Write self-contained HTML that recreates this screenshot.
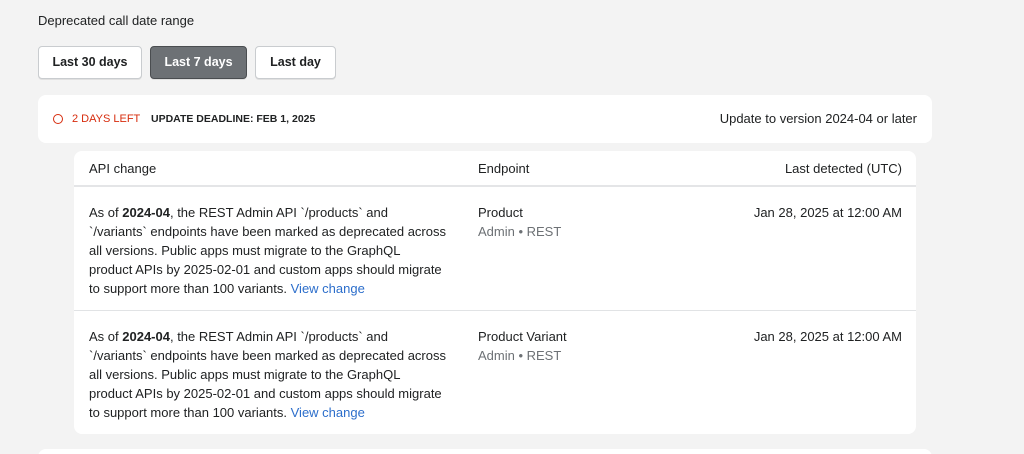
<!DOCTYPE html>
<html><head><style>
html,body{margin:0;width:1024px;height:454px;overflow:hidden}
body{background:#f3f3f3;font-family:"Liberation Sans",sans-serif;font-size:13px;color:#202223;position:relative}
.a{position:absolute;white-space:nowrap}
.btn{position:absolute;top:46px;border:1px solid #c9cccf;border-radius:4px;background:#fff;box-sizing:border-box;height:33px;line-height:31px;text-align:center;font-weight:bold;font-size:12.5px;box-shadow:0 1px 0 rgba(0,0,0,.08)}
.card{position:absolute;background:#fff;border-radius:8px}
.row{position:absolute;left:0;right:0;border-top:1px solid #e1e3e5}
.t{position:absolute;left:15px;top:16px;line-height:19px;font-size:13px;white-space:nowrap}
.grey{color:#6d7175}
a{color:#2c6ecb;text-decoration:none}
</style></head><body>
<div class="a" style="left:38px;top:13px">Deprecated call date range</div>
<div class="btn" style="left:38px;width:104px">Last 30 days</div>
<div class="btn" style="left:150px;width:97px;background:#6d7175;color:#fff;border-color:#4a4d50">Last 7 days</div>
<div class="btn" style="left:255px;width:81px">Last day</div>
<div class="card" style="left:38px;top:95px;width:894px;height:48px">
<div class="a" style="left:15px;top:19px;width:8px;height:8px;border:1.5px solid #d72c0d;border-radius:50%"></div>
<div class="a" style="left:34px;top:18px;color:#d72c0d;font-size:11px">2 DAYS LEFT</div>
<div class="a" style="left:113px;top:18px;font-weight:bold;font-size:10.5px">UPDATE DEADLINE: FEB 1, 2025</div>
<div class="a" style="right:15px;top:16px">Update to version 2024-04 or later</div>
</div>
<div class="card" style="left:74px;top:151px;width:842px;height:283px">
<div class="a" style="left:15px;top:10px">API change</div>
<div class="a" style="left:404px;top:10px">Endpoint</div>
<div class="a" style="right:14px;top:10px">Last detected (UTC)</div>
<div class="row" style="top:34px;height:124px;border-top:2px solid #e4e5e7">
<div class="t">As of <b>2024-04</b>, the REST Admin API `/products` and<br>`/variants` endpoints have been marked as deprecated across<br>all versions. Public apps must migrate to the GraphQL<br>product APIs by 2025-02-01 and custom apps should migrate<br>to support more than 100 variants. <a>View change</a></div>
<div class="a" style="left:404px;top:16px;line-height:19px">Product<br><span class="grey">Admin • REST</span></div>
<div class="a" style="right:14px;top:16px;line-height:19px">Jan 28, 2025 at 12:00 AM</div>
</div>
<div class="row" style="top:159px;height:124px">
<div class="t">As of <b>2024-04</b>, the REST Admin API `/products` and<br>`/variants` endpoints have been marked as deprecated across<br>all versions. Public apps must migrate to the GraphQL<br>product APIs by 2025-02-01 and custom apps should migrate<br>to support more than 100 variants. <a>View change</a></div>
<div class="a" style="left:404px;top:16px;line-height:19px">Product Variant<br><span class="grey">Admin • REST</span></div>
<div class="a" style="right:14px;top:16px;line-height:19px">Jan 28, 2025 at 12:00 AM</div>
</div>
</div>
<div class="card" style="left:38px;top:449px;width:894px;height:20px"></div>
</body></html>
